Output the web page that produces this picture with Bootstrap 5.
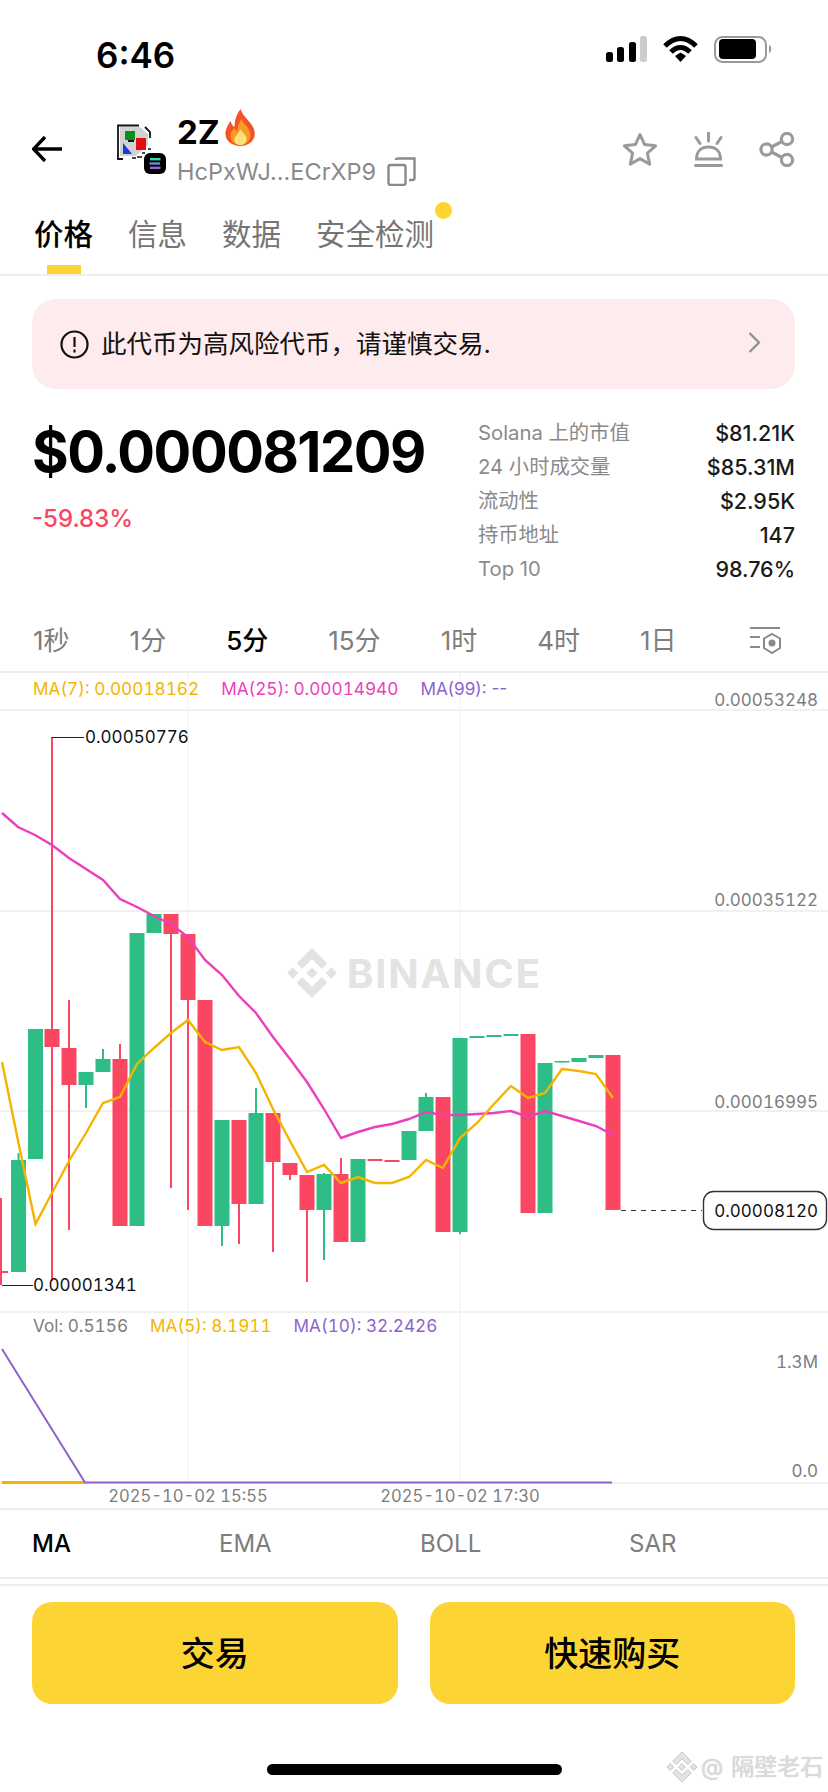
<!DOCTYPE html>
<html lang="zh-CN">
<head>
    <meta charset="UTF-8">
    <meta name="viewport" content="width=device-width, initial-scale=1.0">
    <title>2Z</title>
    <link href="https://cdn.jsdelivr.net/npm/bootstrap@5.3.0/dist/css/bootstrap.min.css" rel="stylesheet">
    <style>
        body {
            font-family: Inter, "Noto Sans CJK SC", sans-serif;
            background: #fff;
            color: #000;
            width: 828px;
            height: 1792px;
            overflow: hidden;
            position: relative;
        }
        .status-bar { height: 104px; padding: 34px 56px 0 96px; }
        .status-time { font-size: 35px; font-weight: 600; line-height: 42px; }
        .head-row { height: 90px; padding: 0 33px 0 32px; }
        .logo-box { width: 50px; height: 50px; margin-left: 55px; position: relative; }
        .logo-badge { position: absolute; left: 27px; top: 29px; }
        .coin-name { font-size: 33px; font-weight: 700; line-height: 40px; height: 40px; margin-left: 2px; }
        .coin-addr { font-size: 23.5px; line-height: 28px; color: #8a8a8a; margin-top: 5px; margin-left: 2px; gap: 11px; }
        .fire-icon { margin: -3px 0 0 4px; }
        .head-icons { gap: 36px; }
        .page-tabs { height: 82px; border-bottom: 2px solid #eee; padding: 0 0 0 34px; gap: 35px; }
        .page-tab { font-size: 29.5px; line-height: 40px; color: #757575; position: relative; padding-top: 20px; height: 80px; }
        .page-tab.on { color: #000; font-weight: 500; }
        .page-tab.on::after { content: ""; position: absolute; left: 13px; width: 34px; height: 9px; bottom: 0; background: #fcd535; }
        .tab-dot { position: absolute; right: -18px; top: 8px; width: 17px; height: 17px; border-radius: 50%; background: #fcd535; }
        .risk-box { margin: 23px 33px 0 32px; height: 90px; background: #feebed; border-radius: 24px; padding: 0 34px 0 28px; font-size: 25.5px; color: #111; }
        .risk-arrow { margin-bottom: 4px; }
        .price-wrap { padding: 0 33px 0 32px; height: 233px; }
        .price-main { font-size: 56px; font-weight: 700; line-height: 64px; margin-top: 31px; letter-spacing: -1.5px; }
        .price-change { font-size: 24px; font-weight: 500; line-height: 30px; color: #f9465f; margin-top: 20px; }
        .stat-list { width: 317px; margin-top: 27px; font-size: 20.3px; }
        .stat-row { height: 34px; line-height: 34px; }
        .stat-row span:first-child { color: #8a8a8a; }
        .stat-row span:last-child { font-weight: 500; color: #1a1a1a; font-size: 21.5px; }
        .frame-row { height: 37px; padding-left: 33px; padding-right: 47px; gap: 60px; font-size: 26px; color: #7d7d7d; line-height: 37px; }
        .frame-row .on { color: #000; font-weight: 500; }
        .chart-wrap { position: relative; margin-top: 12px; height: 839px; border-top: 2px solid #eee; border-bottom: 2px solid #eee; font-feature-settings: "tnum"; }
        .chart-wrap svg { display: block; }
        .legend-row { position: absolute; left: 33px; gap: 22px; font-size: 17.2px; line-height: 24px; }
        .legend-top { top: 4px; }
        .legend-vol { top: 641px; }
        .no-tnum { font-feature-settings: normal; }
        .c-yellow { color: #f4b400; }
        .c-pink { color: #ec3fbd; }
        .c-purple { color: #8e63c9; }
        .c-gray { color: #7d7d7d; }
        .ind-row { height: 69px; font-size: 24px; color: #7d7d7d; border-bottom: 2px solid #eee; padding-left: 32px; }
        .ind-row span { position: absolute; }
        .ind-row span.on { color: #000; font-weight: 500; }
        .ind-ma { left: 32px; }
        .ind-ema { left: 219px; }
        .ind-boll { left: 420px; }
        .ind-sar { left: 629px; }
        .ind-gap { height: 7px; border-bottom: 2px solid #eee; }
        .buy-row { padding: 16px 33px 0 32px; gap: 32px; }
        .buy-btn { height: 102px; flex: 1 1 0; border-radius: 20px; background: #fcd535; border: 0; font-size: 34px; font-weight: 500; color: #000; }
        .home-bar { position: absolute; left: 267px; top: 1764px; width: 295px; height: 11px; border-radius: 6px; background: #000; }
        .wm-mark { position: absolute; left: 667px; top: 1752px; font-size: 23px; color: #dcdcdc; line-height: 30px; text-shadow: 0 0 1px #bbb; }
    </style>
</head>
<body>
    <div class="status-bar d-flex justify-content-between">
        <div class="status-time">6:46</div>
        <svg width="172" height="30" viewBox="600 40 172 30">
            <rect x="606" y="58" width="7" height="10" rx="2.5"/>
            <rect x="617" y="53" width="7" height="15" rx="2.5"/>
            <rect x="629" y="48" width="7" height="20" rx="2.5"/>
            <rect x="640" y="42" width="7" height="26" rx="2.5" fill="#ccc"/>
            <path d="M665 52 C675 42 686 42 696 52" fill="none" stroke="#000" stroke-width="5"/>
            <path d="M671 58 C677 52 684 52 690 58" fill="none" stroke="#000" stroke-width="5"/>
            <path d="M675 62 L680.5 58.5 L686 62 L680.5 68 Z"/>
            <rect x="715" y="43" width="51" height="25" rx="7.5" fill="none" stroke="#999" stroke-width="2"/>
            <rect x="719" y="45" width="37" height="20" rx="4"/>
            <path d="M769 51 C772 52 772 58 769 59 Z" fill="#999"/>
        </svg>
    </div>

    <div class="head-row d-flex align-items-center">
        <svg width="30" height="26" viewBox="0 0 30 26" fill="none" stroke="#000" stroke-width="3.4">
            <path d="M30 13 H2 M13 1 L1.6 13 L13 25"/>
        </svg>
        <div class="logo-box">
            <svg width="36" height="38" viewBox="0 0 36 38">
                <path d="M1 27 V1.5 H22 M28 3 L33 8 V14 M1 1 V35 H6" fill="none" stroke="#111" stroke-width="1.8"/>
                <path d="M3 3 H23 L31 10 V21 L19 32 H3 Z" fill="#d2d2d2"/>
                <rect x="8" y="7" width="10" height="9" fill="#0a8f1e"/>
                <rect x="11" y="16" width="6" height="2" fill="#111"/>
                <rect x="19" y="14" width="10" height="12" fill="#e01010"/>
                <path d="M6 19 L15 30 H6 Z" fill="#1838d8"/>
                <path d="M25 29 h3 M31 25 h3 M20 33 h5 M15 34 h4" stroke="#111" stroke-width="1.6"/>
            </svg>
            <svg class="logo-badge" width="22" height="21" viewBox="0 0 22 21">
                <rect width="22" height="21" rx="6" fill="#000"/>
                <path d="M6 6.2 H16.5" stroke="#34d7b0" stroke-width="2.4"/>
                <path d="M5.5 10.5 H16" stroke="#6a8ddb" stroke-width="2.4"/>
                <path d="M6 14.8 H16.5" stroke="#a65ce0" stroke-width="2.4"/>
            </svg>
        </div>
        <div class="ms-2">
            <div class="coin-name d-flex">2Z
                <svg class="fire-icon" width="33" height="37" viewBox="0 0 32 37">
                    <path d="M16 0 C18 8 28 13 30 22 C32 31 24 37 16 37 C7 37 0 31 1 23 C2 18 4 15 6 12 C7 15 8 17 10 18 C10 11 12 5 16 0 Z" fill="#f2542a"/>
                    <path d="M17 10 C19 15 26 19 26 26 C26 32 21 36 16 36 C10 36 6 32 6 27 C6 23 8 21 10 19 C11 21 12 22 13 23 C13 18 14 14 17 10 Z" fill="#fb9a24"/>
                    <path d="M16 20 C18 24 22 26 22 30 C22 34 19 36 16 36 C13 36 10 34 10 31 C10 27 14 25 16 20 Z" fill="#ffe27a"/>
                </svg>
            </div>
            <div class="coin-addr d-flex align-items-center">HcPxWJ...ECrXP9
                <svg width="29" height="29" viewBox="0 0 29 29" fill="none" stroke="#8a8a8a" stroke-width="2.4">
                    <rect x="1.5" y="8" width="17" height="20" rx="2"/>
                    <path d="M9 3 Q9 1.5 11 1.5 H27.5 V21 Q27.5 23 25 23 H22"/>
                </svg>
            </div>
        </div>
        <div class="head-icons d-flex align-items-center ms-auto">
            <svg width="36" height="35" viewBox="0 0 36 35" fill="none" stroke="#9a9a9a" stroke-width="3" stroke-linejoin="round">
                <path d="M18 2.5 L22.6 12.6 L33.6 13.8 L25.4 21.2 L27.7 32.2 L18 26.6 L8.3 32.2 L10.6 21.2 L2.4 13.8 L13.4 12.6 Z"/>
            </svg>
            <svg width="29" height="35" viewBox="0 0 29 35" fill="none" stroke="#9a9a9a" stroke-width="3" stroke-linecap="round">
                <path d="M14.5 1 V9 M2 5.5 L6 11.5 M27 5.5 L23 11.5"/>
                <path d="M2.5 27 C2.5 19 7.5 15 14.5 15 C21.5 15 26.5 19 26.5 27 Z"/>
                <path d="M1.5 33.5 H27.5" stroke-width="3"/>
            </svg>
            <svg width="36" height="35" viewBox="0 0 36 35" fill="none" stroke="#9a9a9a" stroke-width="3.2">
                <circle cx="7.5" cy="17.5" r="5.6"/>
                <circle cx="28" cy="7" r="5.6"/>
                <circle cx="28" cy="28" r="5.6"/>
                <path d="M12.5 15 L23 9.5 M12.5 20 L23 25.5"/>
            </svg>
        </div>
    </div>

    <div class="page-tabs d-flex">
        <div class="page-tab on">价格</div>
        <div class="page-tab">信息</div>
        <div class="page-tab">数据</div>
        <div class="page-tab">安全检测<span class="tab-dot"></span></div>
    </div>

    <div class="risk-box d-flex align-items-center">
        <svg width="29" height="29" viewBox="0 0 29 29" fill="none" stroke="#111" stroke-width="2.2">
            <circle cx="14.5" cy="14.5" r="13"/>
            <path d="M14.5 7 V17 M14.5 19.5 V22.5"/>
        </svg>
        <span class="ms-2 ps-1">此代币为高风险代币，请谨慎交易.</span>
        <svg class="risk-arrow ms-auto" width="13" height="21" viewBox="0 0 13 21" fill="none" stroke="#8f8f8f" stroke-width="2.2">
            <path d="M1.5 1 L11 10.5 L1.5 20"/>
        </svg>
    </div>

    <div class="price-wrap d-flex justify-content-between">
        <div>
            <div class="price-main">$0.000081209</div>
            <div class="price-change">-59.83%</div>
        </div>
        <div class="stat-list">
            <div class="stat-row d-flex justify-content-between"><span>Solana 上的市值</span><span>$81.21K</span></div>
            <div class="stat-row d-flex justify-content-between"><span>24 小时成交量</span><span>$85.31M</span></div>
            <div class="stat-row d-flex justify-content-between"><span>流动性</span><span>$2.95K</span></div>
            <div class="stat-row d-flex justify-content-between"><span>持币地址</span><span>147</span></div>
            <div class="stat-row d-flex justify-content-between"><span>Top 10</span><span>98.76%</span></div>
        </div>
    </div>

    <div class="frame-row d-flex align-items-center">
        <span>1秒</span><span>1分</span><span class="on">5分</span><span>15分</span><span>1时</span><span>4时</span><span>1日</span>
        <svg class="ms-auto" width="31" height="27" viewBox="0 0 31 27" fill="none" stroke="#8a8a8a" stroke-width="2">
            <path d="M0 1 H30 M0 10 H10 M0 20 H10"/>
            <path d="M22 7 L30 11.5 V21 L22 26 L14 21 V11.5 Z"/>
            <circle cx="22" cy="16" r="2.5" fill="#8a8a8a"/>
        </svg>
    </div>

    <div class="chart-wrap">
        <svg id="chart" width="828" height="835" viewBox="0 672 828 835"></svg>
        <div class="legend-row legend-top d-flex">
            <span class="c-yellow">MA(7): 0.00018162</span>
            <span class="c-pink">MA(25): 0.00014940</span>
            <span class="c-purple no-tnum">MA(99): --</span>
        </div>
        <div class="legend-row legend-vol d-flex">
            <span class="c-gray">Vol: 0.5156</span>
            <span class="c-yellow">MA(5): 8.1911</span>
            <span class="c-purple">MA(10): 32.2426</span>
        </div>
    </div>

    <div class="ind-row d-flex align-items-center">
        <span class="on ind-ma">MA</span>
        <span class="ind-ema">EMA</span>
        <span class="ind-boll">BOLL</span>
        <span class="ind-sar">SAR</span>
    </div>
    <div class="ind-gap"></div>

    <div class="buy-row d-flex">
        <button class="buy-btn btn">交易</button>
        <button class="buy-btn btn">快速购买</button>
    </div>

    <div class="home-bar"></div>
    <div class="wm-mark d-flex align-items-center">
        <svg width="30" height="30" viewBox="0 0 126.6 126.6" fill="#e4e4e4" stroke="#c4c4c4" stroke-width="4">
            <polygon points="38.73 53.2 63.3 28.64 87.88 53.22 102.18 38.93 63.3 0 24.44 38.91"/>
            <polygon points="0 63.31 14.3 49.01 28.6 63.31 14.3 77.61"/>
            <polygon points="38.73 73.41 63.3 97.97 87.88 73.39 102.19 87.67 63.31 126.61 24.43 87.69"/>
            <polygon points="98 63.31 112.3 49 126.6 63.3 112.3 77.61"/>
            <polygon points="77.83 63.3 63.3 48.78 48.79 63.28 63.3 77.83"/>
        </svg>
        <span class="ms-1">@</span><span class="ms-2">隔壁老石</span>
    </div>

    <script>
        // candles: center x, body top, body bottom, wick top, wick bottom, up?
        const candles = [
            [1, 1270, 1272, 1197, 1284, 0],
            [18.5, 1159, 1271, 1152, 1271, 1],
            [35.5, 1028, 1158, 1028, 1158, 1],
            [52, 1028, 1046, 736, 1280, 0],
            [69, 1047, 1084, 999, 1229, 0],
            [86, 1071, 1084, 1071, 1107, 1],
            [103, 1058, 1071, 1048, 1071, 1],
            [120, 1058, 1225, 1043, 1225, 0],
            [137, 932, 1225, 932, 1225, 1],
            [154, 913, 932, 913, 932, 1],
            [171, 913, 933, 913, 1187, 0],
            [188, 933, 999, 933, 1209, 0],
            [205, 999, 1225, 999, 1225, 0],
            [222, 1119, 1225, 1119, 1245, 1],
            [239, 1119, 1203, 1119, 1243, 0],
            [256, 1112, 1203, 1087, 1203, 1],
            [273, 1112, 1161, 1112, 1251, 0],
            [290, 1162, 1174, 1162, 1179, 0],
            [307, 1174, 1209, 1174, 1281, 0],
            [324, 1173, 1209, 1172, 1259, 1],
            [341, 1173, 1241, 1157, 1241, 0],
            [358, 1158, 1241, 1158, 1241, 1],
            [375, 1158, 1160, 1158, 1160, 0],
            [392, 1159, 1161, 1159, 1161, 0],
            [409, 1130, 1159, 1130, 1159, 1],
            [426, 1096, 1130, 1092, 1130, 1],
            [443, 1096, 1231, 1096, 1231, 0],
            [460, 1037, 1231, 1037, 1233, 1],
            [477, 1035, 1037, 1035, 1037, 1],
            [494, 1034, 1036, 1034, 1036, 1],
            [511, 1033, 1035, 1033, 1035, 1],
            [528, 1033, 1212, 1033, 1212, 0],
            [545, 1062, 1212, 1062, 1212, 1],
            [562, 1060, 1061.5, 1060, 1061.5, 1],
            [579, 1057, 1061, 1057, 1061, 1],
            [596, 1054, 1057, 1054, 1057, 1],
            [613, 1054, 1209, 1054, 1209, 0]
        ];
        const ma7 = "2,1061 18.5,1142 35.5,1223 52,1192 69,1160 86,1132 103,1102 120,1096 137,1063 154,1047 171,1032 188,1019 205,1041 222,1049 239,1046 256,1072 273,1108 290,1140 307,1171 324,1164 341,1182 358,1176 375,1182 392,1182 409,1176 426,1159 443,1167 460,1137 477,1122 494,1103 511,1085 528,1097 545,1092 562,1068 579,1070 596,1073 613,1097";
        const ma25 = "2,812 18,826 35,834 52,844 69,857 86,868 103,879 120,898 137,906 154,915 171,923 188,936 205,959 222,974 239,995 256,1012 273,1036 290,1058 307,1081 324,1108 341,1137 358,1131 375,1126 392,1123 409,1118 426,1111 443,1114 460,1114 477,1113 494,1112 511,1110 528,1116 545,1110 562,1115 579,1120 596,1125 613,1134";
        const axisLabels = [["0.00053248", 699], ["0.00035122", 899], ["0.00016995", 1101], ["1.3M", 1361], ["0.0", 1470]];

        let out = "";
        // grid
        [709, 910, 1110, 1311, 1482].forEach(y => {
            out += `<rect x="0" y="${y - 1}" width="828" height="2" fill="#f1f1f1"/>`;
        });
        [188, 460].forEach(x => {
            out += `<rect x="${x - 0.5}" y="672" width="1" height="808" fill="#f1f1f1"/>`;
        });
        // watermark
        out += `<svg x="287" y="947" width="50" height="50" viewBox="0 0 126.6 126.6" fill="#e3e3e3">
            <polygon points="38.73 53.2 63.3 28.64 87.88 53.22 102.18 38.93 63.3 0 24.44 38.91"/>
            <polygon points="0 63.31 14.3 49.01 28.6 63.31 14.3 77.61"/>
            <polygon points="38.73 73.41 63.3 97.97 87.88 73.39 102.19 87.67 63.31 126.61 24.43 87.69"/>
            <polygon points="98 63.31 112.3 49 126.6 63.3 112.3 77.61"/>
            <polygon points="77.83 63.3 63.3 48.78 48.79 63.28 63.3 77.83"/>
        </svg>`;
        out += `<text x="347" y="987" font-family="Inter" font-size="40" font-weight="700" fill="#e3e3e3" textLength="193">BINANCE</text>`;
        // candles
        candles.forEach(([x, top, bot, hi, lo, up], i) => {
            const col = up ? "#2ebd85" : "#fb4662";
            out += `<rect x="${x - 1}" y="${hi}" width="2" height="${lo - hi}" fill="${col}"/>`;
            const left = i === 0 ? 0 : x - 7.5;
            const w = i === 0 ? 8 : 15;
            out += `<rect x="${left}" y="${top}" width="${w}" height="${bot - top}" fill="${col}"/>`;
        });
        // moving averages
        out += `<polyline points="${ma25}" fill="none" stroke="#ec3fbd" stroke-width="2.4"/>`;
        out += `<polyline points="${ma7}" fill="none" stroke="#f4b400" stroke-width="2.4"/>`;
        // high and low marks
        out += `<path d="M52 736.5 H84 M2 1284.5 H33" stroke="#222" stroke-width="1" fill="none"/>`;
        const chartText = (x, y, s, col, anchor, size = 17) =>
            `<text x="${x}" y="${y}" dy=".36em" font-family="Inter" font-size="${size}" fill="${col}" text-anchor="${anchor}">${s}</text>`;
        out += chartText(85, 736, "0.00050776", "#111", "start");
        out += chartText(33, 1284, "0.00001341", "#111", "start");
        axisLabels.forEach(([s, y]) => { out += chartText(818, y, s, "#7d7d7d", "end"); });
        // last price
        out += `<path d="M621 1209.5 H702" stroke="#333" stroke-width="1" stroke-dasharray="5 5"/>`;
        out += `<rect x="703.5" y="1190.5" width="123" height="38" rx="10" fill="#fff" stroke="#333" stroke-width="1.4"/>`;
        out += chartText(818, 1209.5, "0.00008120", "#111", "end");
        // volume panel
        out += `<path d="M2 1481.5 H85" stroke="#f4b400" stroke-width="3"/>`;
        out += `<path d="M2 1348 L85 1481.5 H612" stroke="#8e63c9" stroke-width="2" fill="none"/>`;
        out += chartText(188, 1495, "2025-10-02 15:55", "#7d7d7d", "middle", 16.6);
        out += chartText(460, 1495, "2025-10-02 17:30", "#7d7d7d", "middle", 16.6);
        document.getElementById("chart").innerHTML = out;
    </script>
</body>
</html>
